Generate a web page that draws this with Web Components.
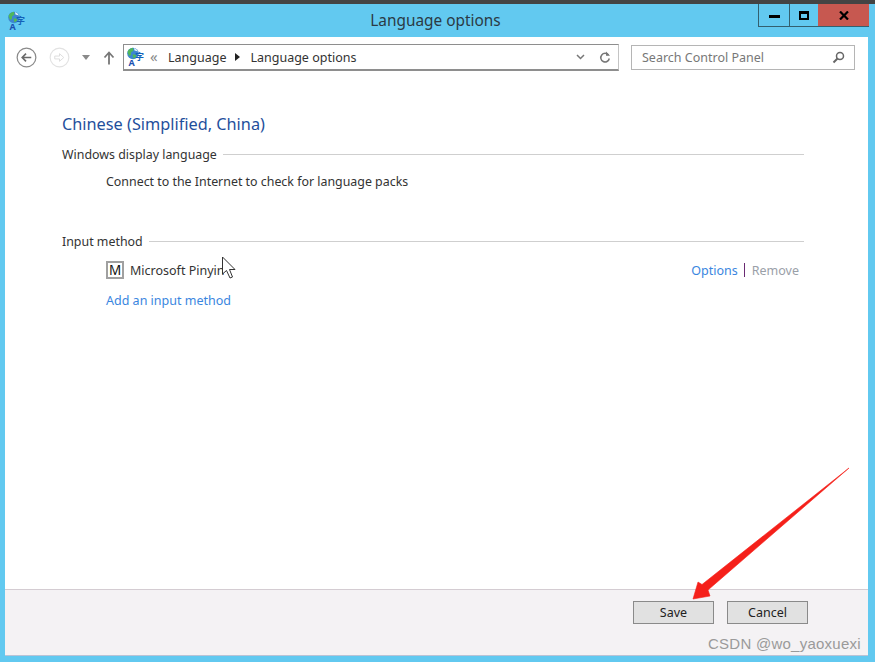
<!DOCTYPE html>
<html>
<head>
<meta charset="utf-8">
<title>Language options</title>
<style>
  html, body { margin: 0; padding: 0; height: 100%; }
  body { width: 875px; height: 662px; overflow: hidden; font-family: "Noto Sans", "Open Sans", sans-serif; color: #333; }
</style>
</head>
<body>
<win-frame>
  <win-titlebar slot="title">Language options</win-titlebar>
  <win-navbar slot="nav"></win-navbar>
  <lang-page slot="body"></lang-page>
  <win-footer slot="footer"></win-footer>
</win-frame>
<script>
// globe + 字 icon, used in the title bar and the address bar
const GLOBE = `
  <svg width="20" height="20" viewBox="0 0 20 20" style="display:block;flex:none">
    <circle cx="7" cy="6.500" r="5.800" fill="#3d86d2"/>
    <path d="M1.500 5 Q3 1.200 7 .8 L7.500 3.500 L5 5.500 L5 8 L3 9Z" fill="#4fb85a"/>
    <path d="M6.500 7.500 L10 7.500 L10 10 L7.500 11.500Z" fill="#4fb85a"/>
    <path d="M8 1 Q11 2 12 4.500 L8.500 3.500Z" fill="#e6f5fc"/>
    <text x="9" y="13" font-family="'Noto Sans CJK SC', sans-serif" font-size="9" font-weight="700" fill="#1462b8">字</text>
    <text x="2.500" y="18.500" font-family="'Noto Sans', sans-serif" font-size="9" font-weight="700" fill="#1b50b0">A</text>
  </svg>`;

class WinFrame extends HTMLElement {
  constructor() {
    super();
    this.attachShadow({ mode: 'open' });
    this.shadowRoot.innerHTML = `
      <style>
        :host { display: flex; flex-direction: column; width: 875px; height: 662px; box-sizing: border-box;
                position: relative; background: #62c9f0; border-top: 4px solid #444; }
        .client { flex: 1; margin: 0 7px 7px 5px; display: flex; flex-direction: column; background: #fff;
                  box-shadow: 0 1px 0 #b9c3d6; min-height: 0; }
        .main { flex: 1; min-height: 0; }
        .cursor { position: absolute; left: 221px; top: 252px; }
        .arrow { position: absolute; left: 680px; top: 458px; }
        .mark { position: absolute; left: 708px; top: 631px; font: 15px "Liberation Sans", sans-serif;
                color: #9a9a9a; letter-spacing: .25px; }
      </style>
      <slot name="title"></slot>
      <div class="client">
        <slot name="nav"></slot>
        <div class="main"><slot name="body"></slot></div>
        <slot name="footer"></slot>
      </div>
      <svg class="cursor" width="16" height="24" viewBox="0 0 16 24">
        <path d="M1.500 1 V18 L5.500 14.500 L9 22 L11.500 21 L8.500 13.500 L14 13.500Z" fill="#fff" stroke="#333" stroke-width="1"/>
      </svg>
      <!-- frame has a 4px top border, so top 458 here lands at 462 on the page -->
      <svg class="arrow" width="175" height="145" viewBox="0 0 175 145">
        <path d="M169 6 L22 122.500 L18 120 L13 137 L30 134 L28 128Z" fill="#f5201a" stroke="#f5201a" stroke-width=".6"/>
      </svg>
      <div class="mark">CSDN @wo_yaoxuexi</div>
    `;
  }
}

class WinTitlebar extends HTMLElement {
  constructor() {
    super();
    this.attachShadow({ mode: 'open' });
    this.shadowRoot.innerHTML = `
      <style>
        :host { display: grid; grid-template-columns: 1fr auto 1fr; align-items: start; height: 33px; }
        .icon { padding: 7px 0 0 7px; }
        .text { font-size: 15.400px; color: #2b3a44; padding-top: 6px; line-height: 21px; margin-right: 4px; }
        .btns { justify-self: end; display: flex; height: 23px; margin-right: 6px; border: 1px solid #33606f;
                border-top: none; box-sizing: border-box; }
        .btn { display: flex; align-items: center; justify-content: center; }
        .min { width: 30px; border-right: 1px solid #33606f; }
        .max { width: 28px; }
        .close { width: 51px; background: #c75850; margin-right: -1px; }
        .min i { width: 11px; height: 3px; background: #000; margin-top: 3px; }
        .max i { width: 6px; height: 4px; border: 2px solid #000; border-top-width: 3px; }
      </style>
      <div class="icon">${GLOBE}</div>
      <div class="text"><slot></slot></div>
      <div class="btns">
        <div class="btn min"><i></i></div>
        <div class="btn max"><i></i></div>
        <div class="btn close">
          <svg width="10" height="9" viewBox="0 0 10 9"><path d="M1 .5 L9 8.500 M9 .5 L1 8.500" stroke="#000" stroke-width="2.200"/></svg>
        </div>
      </div>
    `;
  }
}

class WinNavbar extends HTMLElement {
  constructor() {
    super();
    this.attachShadow({ mode: 'open' });
    this.shadowRoot.innerHTML = `
      <style>
        :host { display: flex; align-items: center; height: 40px; padding: 1px 0 0 11px; box-sizing: border-box;
                font-size: 12.500px; color: #333; }
        svg { display: block; flex: none; }
        .addr { width: 496px; height: 27px; margin-left: 8px; box-sizing: border-box; border: 1px solid #8e8e8e;
                border-bottom-width: 2px; border-right-color: #c4c4c4; display: flex; align-items: center; padding-left: 2px; }
        .chev { color: #8a8a8a; margin: -2px 8px 0 4px; font-size: 15px; width: 10px; }
        .crumb { margin-right: 9px; }
        .sep { width: 0; height: 0; border: 4px solid transparent; border-left: 5px solid #222; border-right: none; margin-right: 10px; }
        .tools { margin-left: auto; display: flex; align-items: center; gap: 14px; padding-right: 7px; }
        .search { width: 224px; height: 25px; margin: -1px 0 0 12px; box-sizing: border-box; border: 1px solid #b5b5b5;
                  display: flex; align-items: center; justify-content: space-between; padding: 0 9px 0 10px; color: #777; }
      </style>
      <svg width="21" height="21" viewBox="0 0 22 22">
        <circle cx="11" cy="11" r="9.800" fill="none" stroke="#8a8a8a" stroke-width="1.300"/>
        <path d="M16 11 H6.500 M10.500 7 L6.500 11 L10.500 15" fill="none" stroke="#6a6a6a" stroke-width="1.700"/>
      </svg>
      <svg style="margin-left:12px" width="21" height="21" viewBox="0 0 22 22">
        <circle cx="11" cy="11" r="9.800" fill="none" stroke="#e2e2e2" stroke-width="1.200"/>
        <path d="M6 9.500 H11 V7 L15.500 11 L11 15 V12.500 H6Z" fill="none" stroke="#dcdcdc"/>
      </svg>
      <svg style="margin-left:11px" width="10" height="6" viewBox="0 0 10 6"><path d="M1 0 H9 L5 5Z" fill="#8a8a8a"/></svg>
      <svg style="margin-left:12px" width="12" height="14" viewBox="0 0 12 14">
        <path d="M6 13.500 V2 M1.500 6.500 L6 1.500 L10.500 6.500" fill="none" stroke="#777" stroke-width="1.800"/>
      </svg>
      <div class="addr">
        ${GLOBE}
        <span class="chev">&#171;</span>
        <span class="crumb">Language</span>
        <span class="sep"></span>
        <span>Language options</span>
        <div class="tools">
          <svg width="9" height="6" viewBox="0 0 9 6"><path d="M1 1 L4.500 4.500 L8 1" fill="none" stroke="#777" stroke-width="1.500"/></svg>
          <svg width="12" height="13" viewBox="0 0 12 13">
            <path d="M9.500 4 A4.300 4.300 0 1 0 10.300 7.500" fill="none" stroke="#777" stroke-width="1.500"/>
            <path d="M7 .5 L7 4.800 L11 4.800Z" fill="#777"/>
          </svg>
        </div>
      </div>
      <div class="search">
        <span>Search Control Panel</span>
        <svg width="13" height="13" viewBox="0 0 13 13">
          <circle cx="8" cy="5" r="3.500" fill="none" stroke="#666" stroke-width="1.500"/>
          <path d="M5.500 7.500 L1.500 11.500" stroke="#666" stroke-width="2"/>
        </svg>
      </div>
    `;
  }
}

class LangSection extends HTMLElement {
  static get observedAttributes() { return ['heading']; }
  constructor() {
    super();
    this.attachShadow({ mode: 'open' });
    this.shadowRoot.innerHTML = `
      <style>
        :host { display: block; font-size: 12.500px; color: #333; }
        .head { display: flex; align-items: center; gap: 6px; line-height: 18px; }
        .head span { font-size: 12.400px; }
        .head i { flex: 1; height: 1px; background: #cfcfcf; margin-top: -1px; }
        .body { padding-left: 44px; }
      </style>
      <div class="head"><span class="label"></span><i></i></div>
      <div class="body"><slot></slot></div>
    `;
  }
  attributeChangedCallback(name, oldVal, newVal) {
    this.shadowRoot.querySelector('.label').textContent = newVal;
  }
}

class LangPage extends HTMLElement {
  constructor() {
    super();
    this.attachShadow({ mode: 'open' });
    this.shadowRoot.innerHTML = `
      <style>
        :host { display: block; padding: 35px 64px 0 57px; font-size: 12.500px; color: #333; }
        h1 { margin: 0 0 10px; font-size: 16.300px; font-weight: 400; color: #1f4f9c; line-height: 24px; }
        .msg { line-height: 18px; margin: 9px 0 0; height: 60px; font-size: 12.400px; }
        .row { display: flex; align-items: center; height: 20px; margin-top: 9px; padding-right: 5px; }
        .ime { width: 18px; height: 18px; box-sizing: border-box; border: 2px solid #a0a0a0; display: flex;
               align-items: center; justify-content: center; font-size: 13.500px; color: #111; margin-right: 6px; }
        .actions { margin-left: auto; display: flex; align-items: center; }
        a { color: #3a86e0; text-decoration: none; }
        .bar { width: 1px; height: 14px; background: #6a2a72; margin: 0 7px 0 6px; }
        .off { color: #9aa0a8; }
        .add { display: block; line-height: 18px; margin-top: 12px; }
      </style>
      <h1>Chinese (Simplified, China)</h1>
      <lang-section heading="Windows display language">
        <p class="msg">Connect to the Internet to check for language packs</p>
      </lang-section>
      <lang-section heading="Input method">
        <div class="row">
          <span class="ime">M</span>
          <span>Microsoft Pinyin</span>
          <span class="actions"><a>Options</a><span class="bar"></span><span class="off">Remove</span></span>
        </div>
        <a class="add">Add an input method</a>
      </lang-section>
    `;
  }
}

class WinFooter extends HTMLElement {
  constructor() {
    super();
    this.attachShadow({ mode: 'open' });
    this.shadowRoot.innerHTML = `
      <style>
        :host { display: flex; justify-content: flex-end; gap: 13px; height: 66px; box-sizing: border-box;
                padding: 11px 60px 0 0; background: #f4f2f4; border-top: 1px solid #d4ccd2; font-size: 12.500px; }
        .b { width: 81px; height: 23px; box-sizing: border-box; border: 1px solid #8a8a8a; background: #e1e1e1;
             display: flex; align-items: center; justify-content: center; color: #222; }
      </style>
      <div class="b">Save</div>
      <div class="b">Cancel</div>
    `;
  }
}

customElements.define('win-frame', WinFrame);
customElements.define('win-titlebar', WinTitlebar);
customElements.define('win-navbar', WinNavbar);
customElements.define('lang-section', LangSection);
customElements.define('lang-page', LangPage);
customElements.define('win-footer', WinFooter);
</script>
</body>
</html>
